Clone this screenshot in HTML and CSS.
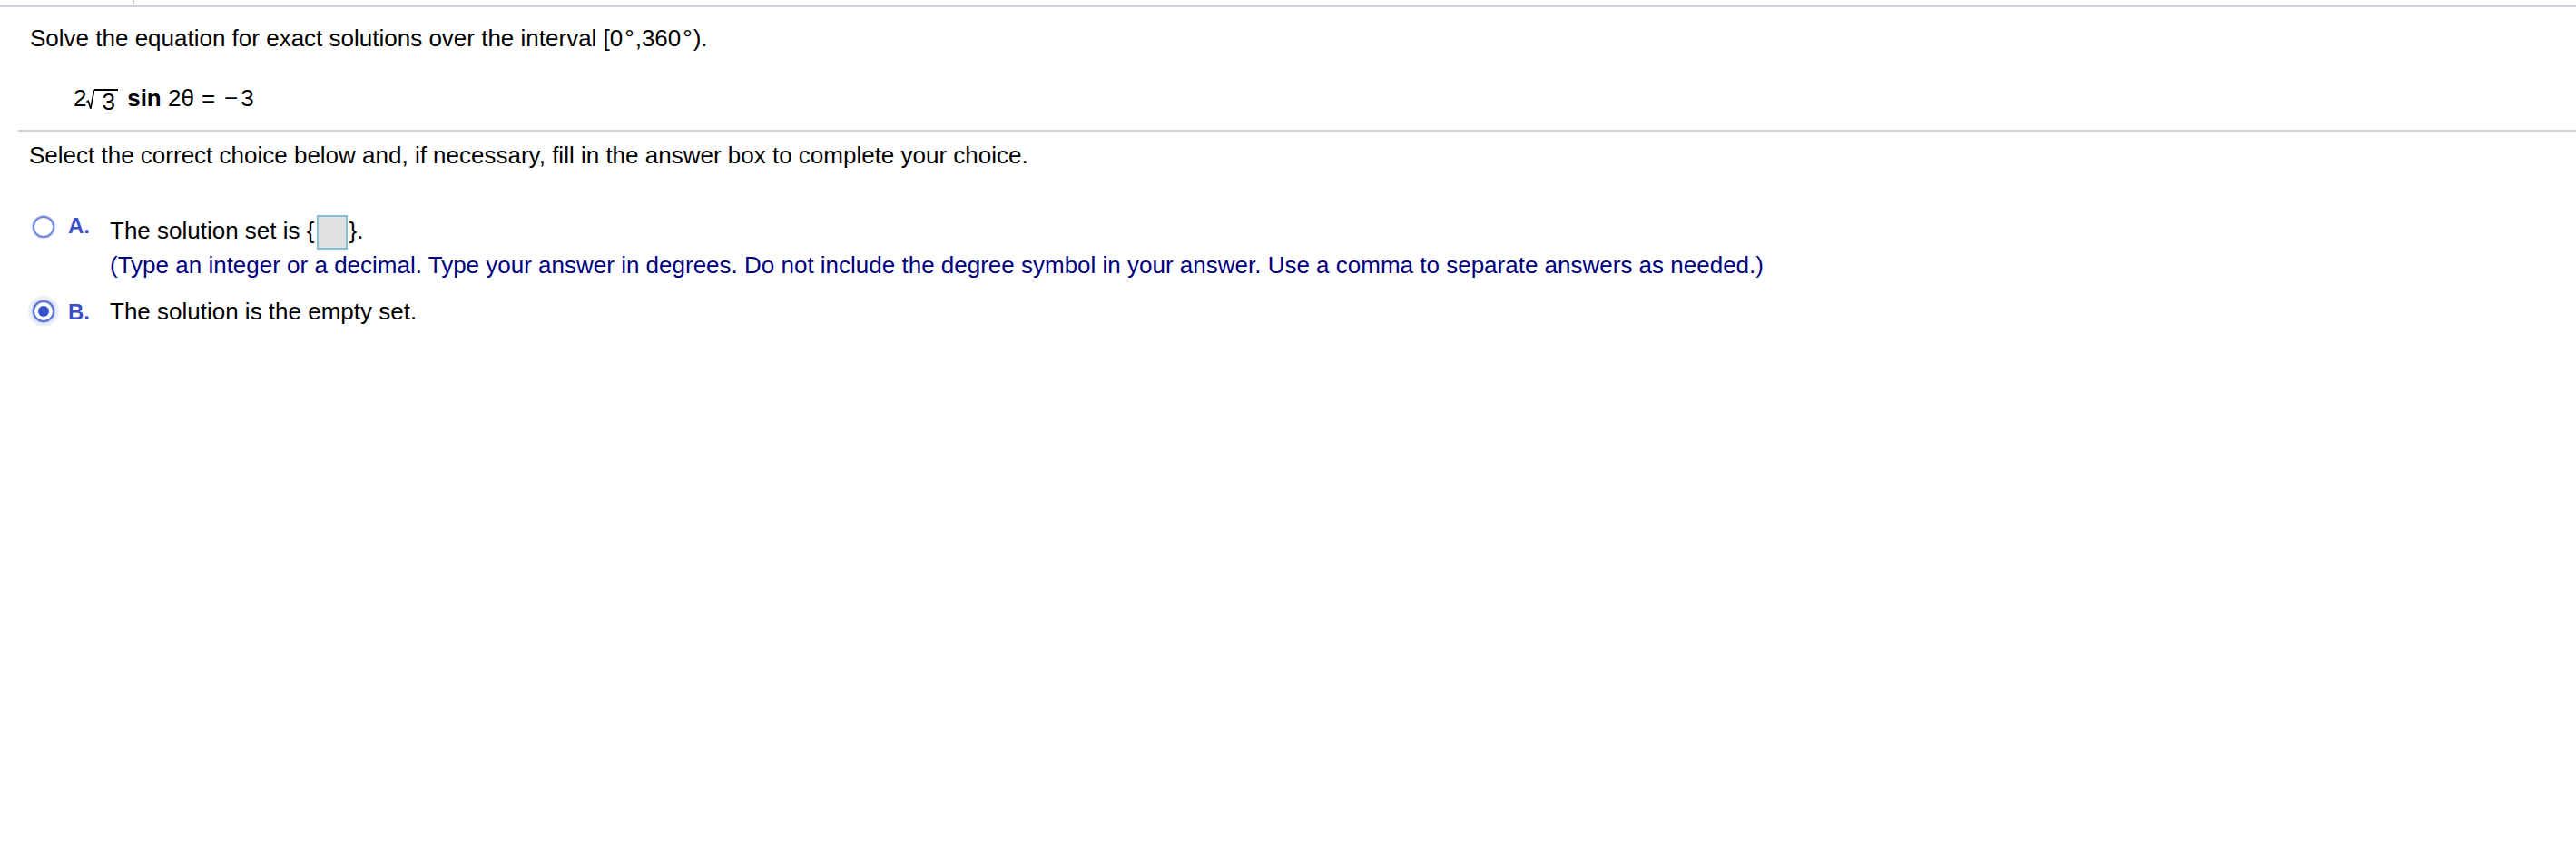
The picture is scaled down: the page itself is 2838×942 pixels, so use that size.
FILE: index.html
```html
<!DOCTYPE html>
<html lang="en">
<head>
<meta charset="utf-8">
<title>Solve the equation</title>
<link rel="stylesheet" href="styles.css">
</head>
<body>
<div class="tabs"><div class="tab"></div></div>
<div class="rule"></div>
<div class="question">
  <p class="prompt">Solve the equation for exact solutions over the interval [0<span class="deg">°</span>,360<span class="deg">°</span>).</p>
  <p class="equation"><span class="num">2</span><span class="sqrt"><svg class="radical" width="9" height="22" viewBox="0 0 9 22"><path d="M0.3 13.5 L2.3 12.2 L4.8 20.8 L8.6 1 L9 1" fill="none" stroke="#000" stroke-width="1.6" stroke-linejoin="miter"/></svg><span class="radicand">3</span></span> <b class="fn">sin</b> 2θ<span class="eq">=</span><span class="minus">−</span><span class="num">3</span></p>
</div>
<div class="divider"></div>
<p class="instruction">Select the correct choice below and, if necessary, fill in the answer box to complete your choice.</p>
<div class="choices">
  <div class="choice choice-a">
    <span class="radio"></span>
    <span class="letter">A.</span>
    <div class="body">
      <div class="line">The solution set is {<span class="answer-box"></span>}.</div>
      <div class="hint">(Type an integer or a decimal. Type your answer in degrees. Do not include the degree symbol in your answer. Use a comma to separate answers as needed.)</div>
    </div>
  </div>
  <div class="choice choice-b">
    <span class="radio checked"></span>
    <span class="letter">B.</span>
    <div class="body">
      <div class="line">The solution is the empty set.</div>
    </div>
  </div>
</div>
</body>
</html>
```
FILE: styles.css
```css
html, body {
  margin: 0;
  padding: 0;
  background: #fff;
}
body {
  font-family: "Liberation Sans", Arial, sans-serif;
  font-size: 26px;
  line-height: 30px;
  color: #000;
}
.tabs {
  display: flex;
  height: 6px;
}
.tab {
  width: 146px;
  height: 4px;
  border-right: 2px solid #cdd1dd;
}
.rule {
  height: 2px;
  background: #cdd1dd;
}
.question {
  padding-left: 33px;
  margin-top: 19px;
}
.prompt {
  margin: 0;
}
.deg {
  margin: 0 1px 0 2px;
}
.equation {
  margin: 36px 0 0 48px;
  height: 30px;
  white-space: nowrap;
}
.sqrt {
  display: inline-block;
  height: 30px;
  vertical-align: top;
}
.radical {
  display: inline-block;
  vertical-align: top;
  margin-top: 6px;
}
.radicand {
  display: inline-block;
  vertical-align: top;
  border-top: 2px solid #000;
  margin-top: 5px;
  line-height: 25px;
  height: 25px;
  padding: 0 3px 0 8px;
}
.fn {
  font-weight: bold;
  margin-left: 3px;
}
.eq {
  margin-left: 8px;
}
.minus {
  margin-left: 10px;
  margin-right: 3px;
}
.divider {
  margin: 20px 0 0 20px;
  height: 2px;
  background: #cdd1dd;
}
.instruction {
  margin: 11px 0 0 32px;
}
.choices {
  margin-top: 53px;
}
.choice {
  display: flex;
  align-items: flex-start;
}
.choice + .choice {
  margin-top: 21px;
}
.radio {
  flex: none;
  box-sizing: border-box;
  width: 24px;
  height: 24px;
  margin-left: 36px;
  border: 2px solid #7487da;
  border-radius: 50%;
  background: #fff;
  box-shadow: 0 0 1px 1px rgba(150, 166, 230, 0.6);
  display: flex;
  align-items: center;
  justify-content: center;
}
.choice-a .radio {
  margin-top: -1px;
}
.choice-b .radio {
  margin-top: 3px;
}
.radio.checked {
  border-color: #5b70d2;
  box-shadow: 0 0 1px 1px rgba(150, 166, 230, 0.6), 0 0 0 5px rgba(200, 208, 245, 0.35);
}
.radio.checked::after {
  content: "";
  width: 12px;
  height: 12px;
  border-radius: 50%;
  background: #3651cc;
}
.letter {
  flex: none;
  width: 46px;
  margin-left: 15px;
  font-size: 24px;
  font-weight: bold;
  color: #3a4ec6;
}
.choice-a .letter {
  margin-top: -5px;
}
.choice-b .letter {
  margin-top: 1px;
}
.body {
  flex: 1;
}
.answer-box {
  display: inline-block;
  box-sizing: border-box;
  width: 34px;
  height: 38px;
  vertical-align: -6px;
  margin: -2px 1px -6px 3px;
  background: #e0e0e0;
  border: 2px solid #86c0cf;
}
.hint {
  margin-top: 8px;
  color: #000080;
}
```
